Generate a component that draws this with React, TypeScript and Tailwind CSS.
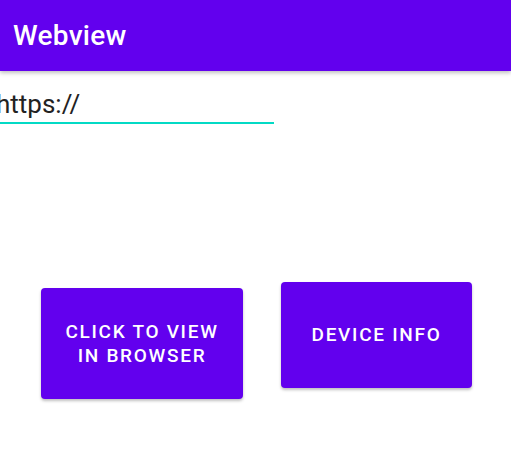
export default function App() {
  return (
    <div className="min-h-screen bg-white font-['Roboto',sans-serif] overflow-hidden">
      {/* App bar */}
      <div className="h-[71px] bg-[#6200EE] flex items-center px-[13px] shadow-[0_2px_4px_rgba(0,0,0,0.25)] relative z-10">
        <h1 className="text-[28px] leading-[32px] font-medium text-white tracking-[0.01em]">Webview</h1>
      </div>

      {/* URL field */}
      <div className="mt-[18px] w-[274px] border-b-2 border-[#03DAC5] pb-[3px]">
        <div className="text-[26px] leading-[30px] text-[#222] ml-[-4px]">https://</div>
      </div>

      {/* Buttons */}
      <div className="flex items-start mt-[158px]">
        <button className="ml-[41px] mt-[6px] w-[202px] h-[111px] rounded-[4px] bg-[#6200EE] text-white text-[19px] leading-[24px] font-medium tracking-[0.09em] uppercase shadow-[0_2px_3px_rgba(0,0,0,0.25)]">
          Click to view
          <br />
          in browser
        </button>
        <button className="ml-[38px] w-[191px] h-[106px] rounded-[4px] bg-[#6200EE] text-white text-[19px] leading-[24px] font-medium tracking-[0.09em] uppercase shadow-[0_2px_3px_rgba(0,0,0,0.25)]">
          Device info
        </button>
      </div>
    </div>
  );
}
